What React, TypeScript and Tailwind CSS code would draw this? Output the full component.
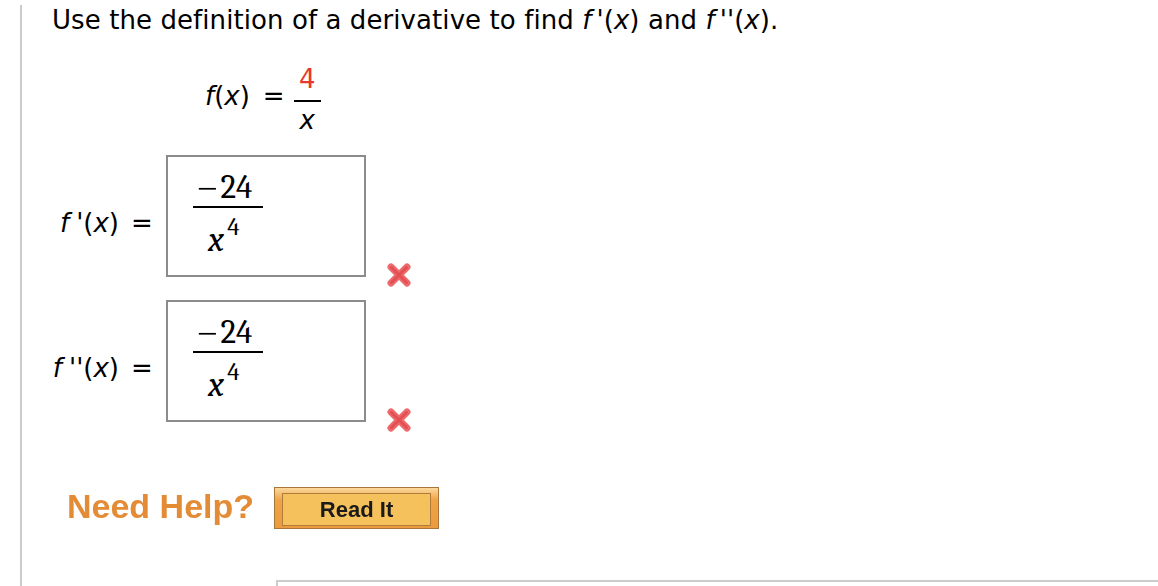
import React from "react";

function WrongMark() {
  return (
    <svg width="26" height="26" viewBox="0 0 26 26" className="shrink-0 blur-[0.4px]">
      <path d="M5 5 L21 21 M21 5 L5 21" stroke="#ec6a6c" strokeWidth="7" strokeLinecap="round" />
      <path d="M5.5 5.5 L20.5 20.5 M20.5 5.5 L5.5 20.5" stroke="#dc3a40" strokeWidth="3" strokeLinecap="round" opacity="0.55" />
    </svg>
  );
}

function AnswerBox() {
  return (
    <div className="h-[122px] w-[200px] shrink-0 border-2 border-[#8c8c8c] pl-[25px] pt-[13px]">
      <div className="flex w-[70px] flex-col items-center font-serif text-black">
        <div className="mr-[5px] text-[33px] leading-[34px]">
          <span className="mr-[4px] inline-block scale-x-[1.3]">−</span>24
        </div>
        <div className="mt-[2px] h-[2px] w-full bg-black" />
        <div className="mr-[8px] mt-[15px] text-[33px] leading-[34px]">
          <i className="text-[36px]">x</i>
          <span className="ml-[3px] align-[16px] text-[25px] leading-[0]">4</span>
        </div>
      </div>
    </div>
  );
}

function AnswerRow({ primes }: { primes: string }) {
  return (
    <div className="flex items-start">
      <div className="mt-[53px] w-[67px] text-right text-[26px] leading-[30px]">
        <i>f</i>
        <span className="ml-[7px]">{primes}</span>(<i>x</i>)
      </div>
      <div className="ml-[12px] mt-[53px] text-[26px] leading-[30px]">=</div>
      <div className="ml-[13px]">
        <AnswerBox />
      </div>
      <div className="ml-[20px] mt-[107px]">
        <WrongMark />
      </div>
    </div>
  );
}

export default function App() {
  return (
    <div className="h-[586px] w-[1158px] overflow-hidden bg-white pl-5 font-['DejaVu_Sans'] text-black">
      <div className="h-full border-l-2 border-[#cccccc] pl-[30px]">
        <p className="mt-[5px] text-[26px] leading-[30px] tracking-[0.08px]">
          Use the definition of a derivative to find <i>f</i>
          <span className="ml-[5px]">'</span>(<i>x</i>) and <i>f</i>
          <span className="ml-[5px]">''</span>(<i>x</i>).
        </p>

        <div className="ml-[153px] mt-[29px] flex items-start text-[26px] leading-[30px]">
          <div className="mt-[17px]">
            <i>f</i>(<i>x</i>)<span className="ml-[13px]">=</span>
          </div>
          <div className="ml-[9px] flex w-[27px] flex-col items-center">
            <div className="text-[#e8382e]">4</div>
            <div className="mt-[6px] h-[1.5px] w-full bg-black" />
            <div className="mt-[3px]">
              <i>x</i>
            </div>
          </div>
        </div>

        <div className="mt-[20px]">
          <AnswerRow primes="'" />
        </div>
        <div className="mt-[12px]">
          <AnswerRow primes="''" />
        </div>

        <div className="mt-[54px] flex items-start">
          <div className="ml-[15px] mt-[-2px] font-['Liberation_Sans'] text-[34px] font-bold leading-[42px] text-[#e48b36] blur-[0.3px]">
            Need Help?
          </div>
          <div className="ml-[20px] h-[42px] w-[165px] border border-[#a8763a] bg-[linear-gradient(#fbd89c,#efa447_30%,#eb9b3e)] px-[7px] pb-[2px] pt-[5px]">
            <div className="flex h-full items-center justify-center border border-[#b07c3c] bg-[#f5c15c] font-['Liberation_Sans'] text-[22px] font-bold text-[#1a1a1a] blur-[0.3px]">
              Read It
            </div>
          </div>
        </div>

        <div className="ml-[224px] mt-[51px] h-[40px] border-l-2 border-t-2 border-[#cccccc]" />
      </div>
    </div>
  );
}
